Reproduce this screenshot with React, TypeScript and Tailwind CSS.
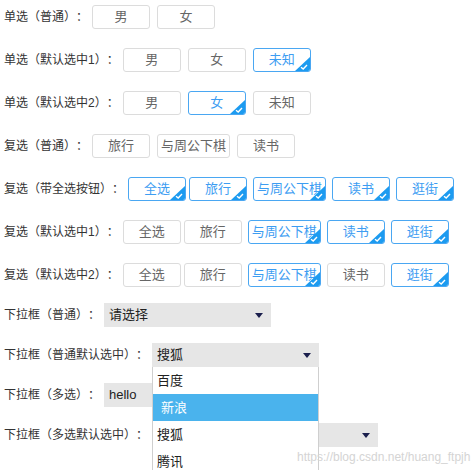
import React from 'react'

// ── Data ─────────────────────────────────────────────────────────────────────

interface Tag {
  text: string
  on?: boolean
}

interface TagRow {
  label: string
  tags: Tag[]
  checkbox?: boolean
}

const TAG_ROWS: TagRow[] = [
  { label: '单选（普通）：', tags: [{ text: '男' }, { text: '女' }] },
  { label: '单选（默认选中1）：', tags: [{ text: '男' }, { text: '女' }, { text: '未知', on: true }] },
  { label: '单选（默认选中2）：', tags: [{ text: '男' }, { text: '女', on: true }, { text: '未知' }] },
  { label: '复选（普通）：', tags: [{ text: '旅行' }, { text: '与周公下棋' }, { text: '读书' }] },
  {
    label: '复选（带全选按钮）：',
    checkbox: true,
    tags: [
      { text: '全选', on: true },
      { text: '旅行', on: true },
      { text: '与周公下棋', on: true },
      { text: '读书', on: true },
      { text: '逛街', on: true },
    ],
  },
  {
    label: '复选（默认选中1）：',
    checkbox: true,
    tags: [
      { text: '全选' },
      { text: '旅行' },
      { text: '与周公下棋', on: true },
      { text: '读书', on: true },
      { text: '逛街', on: true },
    ],
  },
  {
    label: '复选（默认选中2）：',
    checkbox: true,
    tags: [
      { text: '全选' },
      { text: '旅行' },
      { text: '与周公下棋', on: true },
      { text: '读书' },
      { text: '逛街', on: true },
    ],
  },
]

const OPTIONS = ['百度', '新浪', '搜狐', '腾讯']

// ── Pieces ───────────────────────────────────────────────────────────────────

function Corner() {
  return (
    <svg className="absolute right-0 bottom-0" width="15" height="14" viewBox="0 0 15 14">
      <polygon points="15,0 15,14 0,14" fill="#1c9bf0" />
      <path d="M6 10.2 L8.2 12 L12 8" fill="none" stroke="#fff" strokeWidth="1.4" />
    </svg>
  )
}

function TagButton({ tag }: { tag: Tag }) {
  return (
    <span
      className={
        tag.on
          ? 'relative flex h-[24px] min-w-[58px] items-center justify-center overflow-hidden rounded-[3px] border border-[#4aa7f2] px-[3px] text-[13px] text-[#3d9df2]'
          : 'relative flex h-[24px] min-w-[58px] items-center justify-center overflow-hidden rounded-[3px] border border-[#dcdcdc] px-[3px] text-[13px] text-[#666]'
      }
    >
      {tag.text}
      {tag.on && <Corner />}
    </span>
  )
}

function Arrow() {
  return (
    <svg width="8" height="5" viewBox="0 0 8 5">
      <polygon points="0,0 8,0 4,5" fill="#1b1f4d" />
    </svg>
  )
}

function FakeSelect({ value, className }: { value: string; className: string }) {
  return (
    <div className={`flex h-[24px] items-center justify-between bg-[#e6e6e6] pl-[5px] pr-[8px] text-[13px] text-[#222] ${className}`}>
      <span>{value}</span>
      <Arrow />
    </div>
  )
}

function Label({ children }: { children: React.ReactNode }) {
  return <span className="whitespace-nowrap text-[12px] [text-spacing-trim:space-all]">{children}</span>
}

// ── Page ─────────────────────────────────────────────────────────────────────

export default function App() {
  return (
    <div
      className="relative h-[470px] w-[474px] overflow-hidden bg-white pl-[4px] pt-[5px] text-[#333]"
      style={{ fontFamily: '"Liberation Sans", "Noto Sans CJK SC", sans-serif' }}
    >
      <div className="flex flex-col gap-[19px]">
        {TAG_ROWS.map((row, i) => (
          <div key={i} className="flex items-center">
            <Label>{row.label}</Label>
            <div className={row.checkbox ? 'ml-[4px] flex gap-[6px]' : 'ml-[4px] flex gap-[7px]'}>
              {row.tags.map((tag, j) => (
                <div key={j} className={row.checkbox && j === 0 ? '-mr-[3px]' : ''}>
                  <TagButton tag={tag} />
                </div>
              ))}
            </div>
          </div>
        ))}
      </div>

      <div className="mt-[16px] flex flex-col gap-[16px]">
        <div className="flex items-center">
          <Label>下拉框（普通）：</Label>
          <FakeSelect value="请选择" className="ml-[4px] w-[167px]" />
        </div>

        <div className="relative flex items-center">
          <Label>下拉框（普通默认选中）：</Label>
          <div className="relative ml-[4px]">
            <FakeSelect value="搜狐" className="w-[167px]" />
            {/* open option list */}
            <div className="absolute left-0 top-[24px] z-10 w-[167px] border-x border-[#cfcfcf] bg-white text-[13px] text-[#222]">
              {OPTIONS.map(opt => (
                <div
                  key={opt}
                  className={
                    opt === '新浪'
                      ? 'flex h-[27px] items-center bg-[#4ab3ed] pl-[8px] text-white'
                      : 'flex h-[27px] items-center pl-[4px]'
                  }
                >
                  {opt}
                </div>
              ))}
            </div>
          </div>
        </div>

        <div className="flex items-center">
          <Label>下拉框（多选）：</Label>
          <FakeSelect value="hello" className="ml-[4px] w-[167px]" />
        </div>

        <div className="flex items-center">
          <Label>下拉框（多选默认选中）：</Label>
          <FakeSelect value="" className="ml-[4px] w-[226px]" />
        </div>
      </div>

      <span className="pointer-events-none absolute left-[297px] top-[448px] z-20 text-[12px] text-[#d4d4d4]">
        https://blog.csdn.net/huang_ftpjh
      </span>
    </div>
  )
}
